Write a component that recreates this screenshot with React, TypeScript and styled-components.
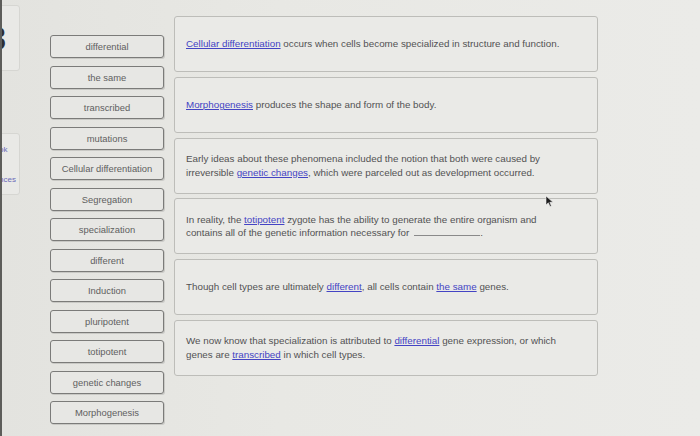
import React from "react";
import styled, { createGlobalStyle } from "styled-components";

const Global = createGlobalStyle`
  html, body { margin: 0; padding: 0; }
  body {
    width: 700px;
    height: 436px;
    overflow: hidden;
    background: linear-gradient(90deg, #e3e3df 0%, #e8e8e4 40%, #ebebe8 100%);
    font-family: "Liberation Sans", Arial, sans-serif;
  }
`;

const Page = styled.div`
  position: relative;
  display: flex;
  width: 700px;
  height: 436px;
  overflow: hidden;
`;

const Edge = styled.div`
  width: 2px;
  background: #5d5d5a;
  flex: none;
`;

const Side = styled.div`
  width: 18px;
  flex: none;
  display: flex;
  flex-direction: column;
  gap: 62px;
  padding-top: 5px;
  overflow: hidden;
`;

const SideBox = styled.div<{ $h: number }>`
  height: ${(p) => p.$h}px;
  margin-left: -10px;
  width: 26px;
  border: 1px solid #d6d6d2;
  border-radius: 3px;
  background: #e9e9e6;
  position: relative;
  display: flex;
  flex-direction: column;
  justify-content: center;
`;

const BigGlyph = styled.div`
  font-size: 34px;
  font-weight: bold;
  color: #2f2f33;
  margin-left: -6px;
  line-height: 1;
`;

const SideLink = styled.div`
  font-size: 8px;
  color: #6a6ab8;
  line-height: 15px;
  padding-left: 6px;
  white-space: nowrap;
`;

const Words = styled.div`
  margin-left: 30px;
  padding-top: 35px;
  width: 114px;
  flex: none;
  display: flex;
  flex-direction: column;
  gap: 7.5px;
`;

const Chip = styled.div`
  height: 23px;
  box-sizing: border-box;
  border: 1.5px solid #7b7b79;
  border-radius: 3px;
  background: #e7e7e4;
  box-shadow: 1px 1px 0 rgba(0, 0, 0, 0.12);
  display: flex;
  align-items: center;
  justify-content: center;
  font-size: 9.4px;
  color: #606060;
  white-space: nowrap;
`;

const Sentences = styled.div`
  margin-left: 10px;
  padding-top: 16px;
  width: 424px;
  flex: none;
  display: flex;
  flex-direction: column;
  gap: 4.8px;
`;

const Box = styled.div`
  height: 56px;
  box-sizing: border-box;
  border: 1.5px solid #bdbdb9;
  border-radius: 3px;
  background: #eaeae7;
  display: flex;
  align-items: center;
  padding: 0 0 0 11px;
  font-size: 9.8px;
  line-height: 13.5px;
  color: #525253;
`;

const Text = styled.div`
  max-width: 380px;
`;

const Link = styled.span`
  color: #4444c4;
  text-decoration: underline;
`;

const Blank = styled.span`
  display: inline-block;
  width: 66px;
  border-bottom: 1px solid #8a8a8a;
  margin-left: 5px;
  vertical-align: baseline;
`;

const Cursor = styled.svg`
  position: absolute;
  left: 545px;
  top: 195px;
`;

const words = [
  "differential",
  "the same",
  "transcribed",
  "mutations",
  "Cellular differentiation",
  "Segregation",
  "specialization",
  "different",
  "Induction",
  "pluripotent",
  "totipotent",
  "genetic changes",
  "Morphogenesis",
];

export default function App() {
  return (
    <Page>
      <Global />
      <Edge />
      <Side>
        <SideBox $h={64}>
          <BigGlyph>8</BigGlyph>
        </SideBox>
        <SideBox $h={60}>
          <SideLink>ok</SideLink>
          <SideLink>t</SideLink>
          <SideLink>nces</SideLink>
        </SideBox>
      </Side>
      <Words>
        {words.map((w) => (
          <Chip key={w}>{w}</Chip>
        ))}
      </Words>
      <Sentences>
        <Box>
          <Text>
            <Link>Cellular differentiation</Link> occurs when cells become specialized in structure and function.
          </Text>
        </Box>
        <Box>
          <Text>
            <Link>Morphogenesis</Link> produces the shape and form of the body.
          </Text>
        </Box>
        <Box>
          <Text>
            Early ideas about these phenomena included the notion that both were caused by irreversible{" "}
            <Link>genetic changes</Link>, which were parceled out as development occurred.
          </Text>
        </Box>
        <Box>
          <Text>
            In reality, the <Link>totipotent</Link> zygote has the ability to generate the entire organism and
            contains all of the genetic information necessary for
            <Blank />.
          </Text>
        </Box>
        <Box>
          <Text>
            Though cell types are ultimately <Link>different</Link>, all cells contain <Link>the same</Link> genes.
          </Text>
        </Box>
        <Box>
          <Text>
            We now know that specialization is attributed to <Link>differential</Link> gene expression, or which
            genes are <Link>transcribed</Link> in which cell types.
          </Text>
        </Box>
      </Sentences>
      <Cursor width="9" height="13" viewBox="0 0 9 13">
        <path d="M1 1 L1 10 L3.3 7.8 L5 11.5 L6.4 10.9 L4.8 7.3 L8 7.3 Z" fill="#1e1e1e" stroke="#f2f2f2" strokeWidth="0.6" />
      </Cursor>
    </Page>
  );
}
